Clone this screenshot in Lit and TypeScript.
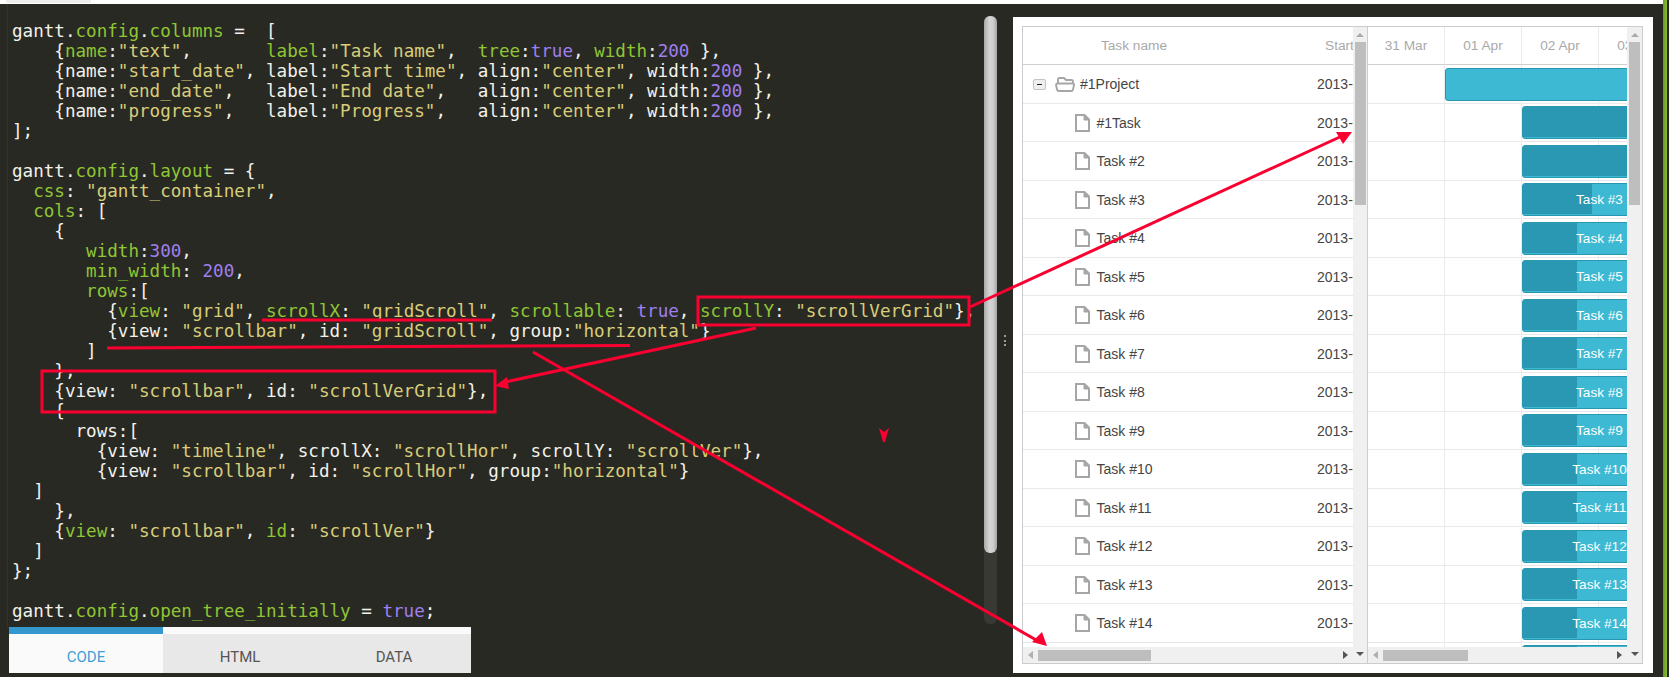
import { LitElement, html, css, svg } from "lit";
import { customElement } from "lit/decorators.js";

const CODE: string[] = [
  `gantt.<g>config</>.<g>columns</> =  [`,
  `    {<g>name</>:<y>"text"</>,       <g>label</>:<y>"Task name"</>,  <g>tree</>:<p>true</>, <g>width</>:<p>200</> },`,
  `    {name:<y>"start_date"</>, label:<y>"Start time"</>, align:<y>"center"</>, width:<p>200</> },`,
  `    {name:<y>"end_date"</>,   label:<y>"End date"</>,   align:<y>"center"</>, width:<p>200</> },`,
  `    {name:<y>"progress"</>,   label:<y>"Progress"</>,   align:<y>"center"</>, width:<p>200</> },`,
  `];`,
  ``,
  `gantt.<g>config</>.<g>layout</> = {`,
  `  <g>css</>: <y>"gantt_container"</>,`,
  `  <g>cols</>: [`,
  `    {`,
  `       <g>width</>:<p>300</>,`,
  `       <g>min_width</>: <p>200</>,`,
  `       <g>rows</>:[`,
  `         {<g>view</>: <y>"grid"</>, <g>scrollX</>: <y>"gridScroll"</>, <g>scrollable</>: <p>true</>, <g>scrollY</>: <y>"scrollVerGrid"</>},`,
  `         {view: <y>"scrollbar"</>, id: <y>"gridScroll"</>, group:<y>"horizontal"</>}`,
  `       ]`,
  `    },`,
  `    {view: <y>"scrollbar"</>, id: <y>"scrollVerGrid"</>},`,
  `    {`,
  `      rows:[`,
  `        {view: <y>"timeline"</>, scrollX: <y>"scrollHor"</>, scrollY: <y>"scrollVer"</>},`,
  `        {view: <y>"scrollbar"</>, id: <y>"scrollHor"</>, group:<y>"horizontal"</>}`,
  `  ]`,
  `    },`,
  `    {<g>view</>: <y>"scrollbar"</>, <g>id</>: <y>"scrollVer"</>}`,
  `  ]`,
  `};`,
  ``,
  `gantt.<g>config</>.<g>open_tree_initially</> = <p>true</>;`,
];

function renderLine(src: string) {
  const parts: unknown[] = [];
  const re = /<([gyp])>(.*?)<\/>/g;
  let last = 0;
  let m: RegExpExecArray | null;
  while ((m = re.exec(src))) {
    parts.push(src.slice(last, m.index));
    parts.push(html`<span class=${m[1]}>${m[2]}</span>`);
    last = m.index + m[0].length;
  }
  parts.push(src.slice(last));
  return html`<div class="line">${parts}</div>`;
}

interface Task {
  name: string;
  progress: number;
  label: string;
}

const TASKS: Task[] = [
  { name: "#1Task", progress: 100, label: "" },
  { name: "Task #2", progress: 100, label: "" },
  { name: "Task #3", progress: 45, label: "Task #3" },
  ...[4, 5, 6, 7, 8, 9, 10, 11, 12, 13, 14, 15].map((n) => ({
    name: `Task #${n}`,
    progress: 35,
    label: `Task #${n}`,
  })),
];

const fileIcon = html`<svg class="file" width="15" height="18" viewBox="0 0 15 18">
  <path d="M1 1H9.5L14 5.5V17H1Z" fill="#fff" stroke="#a6a6a6" stroke-width="2" />
  <path d="M9 1V6H14" fill="#a6a6a6" stroke="#a6a6a6" stroke-width="1" />
</svg>`;

const folderIcon = html`<svg class="folder" width="20" height="15" viewBox="0 0 20 15" fill="none" stroke="#a6a6a6" stroke-width="1.9">
  <path d="M3 6V2.5Q3 1 4.5 1H9L11 3H16.5Q18 3 18 4.5V6" />
  <path d="M1 8Q1 6.5 2.5 6.5H17.5Q19.4 6.5 19 8L18 12.5Q17.7 14 16 14H4Q2.3 14 2 12.5Z" />
</svg>`;

const RED = "#fa0030";

const overlay = svg`
  <g fill="none" stroke=${RED} stroke-width="3">
    <path d="M262 320H492" />
    <rect x="698" y="297" width="271" height="28" />
    <path d="M107 348L630 345.5" />
    <rect x="42" y="371" width="453" height="41" />
    <path d="M970 307L1342 136" />
    <path d="M756 328L505 382" />
    <path d="M533 352L1038 641" />
  </g>
  <g fill=${RED}>
    <polygon points="1352,132 1336,132 1343,144" />
    <polygon points="495,386 507,377 509,389" />
    <polygon points="1047,646 1032,642 1042,632" />
    <polygon points="879,428 884,432 889,428 885,442 883,442" />
  </g>
`;

@customElement("app-root")
export class AppRoot extends LitElement {
  static styles = css`
    :host {
      display: block;
      position: relative;
      width: 1669px;
      height: 677px;
      overflow: hidden;
      background: #292923;
      font-family: "Liberation Sans", Arial, sans-serif;
    }
    .top {
      display: flex;
      height: 4px;
      width: 1663px;
      background: #fff;
    }
    .top-tab {
      width: 85px;
      height: 3px;
      margin-left: 6px;
      background: #eeeeee;
    }
    .main {
      display: flex;
      height: 673px;
    }
    .left {
      width: 984px;
      height: 669px;
      display: flex;
      flex-direction: column;
    }
    .editor {
      flex: 1;
      min-height: 0;
      margin-left: 7px;
      padding: 17px 0 0 4px;
      border-left: 1px solid #33332d;
      overflow: hidden;
      font-family: "DejaVu Sans Mono", "Liberation Mono", monospace;
      font-size: 17.58px;
      line-height: 20px;
      color: #f2f2ec;
      white-space: pre;
    }
    .line {
      height: 20px;
    }
    .g { color: #8fc634; }
    .y { color: #d8cd7a; }
    .p { color: #9f7fef; }
    .tabs {
      display: flex;
      flex: none;
      width: 462px;
      height: 46px;
      margin-left: 9px;
      font-family: Roboto, sans-serif;
      font-size: 15px;
    }
    .tab {
      flex: 1;
      display: flex;
      align-items: center;
      justify-content: center;
      padding-top: 7px;
      box-sizing: border-box;
      border-top: 7px solid #fafafa;
      background: #e8e8e8;
      color: #555;
    }
    .tab.active {
      border-top-color: #3498cf;
      background: #fafafa;
      color: #3f9fd6;
    }
    .vs-col {
      width: 13px;
      height: 608px;
      margin-top: 12px;
      border-radius: 6px;
      background: #383834;
    }
    .vs-thumb {
      height: 537px;
      border-radius: 6px;
      background: linear-gradient(to right, #a8a8a8, #d4d4d4 40%, #cfcfcf 70%, #a4a4a4);
    }
    .split {
      width: 16px;
      height: 100%;
      display: flex;
      flex-direction: column;
      align-items: center;
      justify-content: center;
      gap: 2.5px;
    }
    .split i {
      display: block;
      width: 2px;
      height: 2px;
      background: #9a9a9a;
    }
    .panel {
      width: 640px;
      height: 656px;
      margin-top: 13px;
      box-sizing: border-box;
      padding: 9px 10px 9px 9px;
      background: #fff;
    }
    .gantt {
      display: flex;
      height: 638px;
      box-sizing: border-box;
      border: 1px solid #cccccc;
      color: #454545;
      font-size: 14px;
    }
    .area {
      display: flex;
      flex-direction: column;
      min-width: 0;
    }
    .area.grid { width: 330px; }
    .area.time { width: 259px; border-left: 1px solid #cccccc; }
    .head {
      display: flex;
      flex: none;
      height: 38px;
      box-sizing: border-box;
      border-bottom: 1.5px solid #d0d0d0;
      overflow: hidden;
      color: #a9a9a9;
      font-size: 13.7px;
      white-space: nowrap;
      align-items: center;
    }
    .h-name { flex: none; width: 222px; text-align: center; }
    .h-start { flex: none; margin-left: 80px; }
    .h-cell {
      flex: none;
      width: 77px;
      height: 100%;
      box-sizing: border-box;
      border-right: 1px solid #ebebeb;
      display: flex;
      align-items: center;
      justify-content: center;
    }
    .rows {
      height: 582px;
      flex: none;
      overflow: hidden;
    }
    .row {
      display: flex;
      align-items: center;
      height: 38.53px;
      box-sizing: border-box;
      padding-top: 1px;
      border-bottom: 1px solid #e9e9e9;
      white-space: nowrap;
    }
    .row.timeline {
      background: repeating-linear-gradient(to right, transparent 0 76px, #ebebeb 76px 77px);
    }
    .tree {
      flex: none;
      width: 294px;
      box-sizing: border-box;
      display: flex;
      align-items: center;
      padding-left: 52px;
    }
    .tree.project { padding-left: 10px; }
    .box {
      flex: none;
      width: 13px;
      height: 11px;
      box-sizing: border-box;
      margin-right: 9px;
      border: 1.5px solid #c4c4c4;
      border-radius: 2px;
      background: #eee;
      display: flex;
      align-items: center;
      justify-content: center;
    }
    .box::before {
      content: "";
      width: 5px;
      height: 1.5px;
      background: #222;
    }
    .folder { flex: none; margin-right: 5px; }
    .file { flex: none; margin-right: 6.5px; }
    .bar {
      position: relative;
      flex: none;
      height: 33px;
      box-sizing: border-box;
      border: 1px solid #2898b0;
      border-radius: 3px;
      background: #3db9d3;
      color: #fff;
      font-size: 13.6px;
      display: flex;
      align-items: center;
      justify-content: center;
      overflow: hidden;
    }
    .bar span { position: relative; }
    .progress {
      position: absolute;
      left: 0;
      top: 0;
      bottom: 1px;
      background: #2a98b3;
    }
    .hscroll {
      flex: 1;
      display: flex;
      align-items: center;
      padding: 0 5px;
      background: #f0f0f0;
    }
    .hthumb {
      height: 11px;
      background: #bebebe;
    }
    .tri-l, .tri-r, .tri-u, .tri-d {
      flex: none;
      width: 0;
      height: 0;
    }
    .tri-l { border: 4px solid transparent; border-left: 0; border-right: 5px solid #b0b0b0; }
    .tri-r { border: 4px solid transparent; border-right: 0; border-left: 5px solid #555; margin-left: auto; }
    .tri-u { border: 4px solid transparent; border-top: 0; border-bottom: 4px solid #aaa; }
    .tri-d { border: 4px solid transparent; border-bottom: 0; border-top: 4px solid #555; }
    .vscroll {
      flex: none;
      display: flex;
      flex-direction: column;
      align-items: center;
      width: 14px;
      background: #f0f0f0;
      padding: 6px 0 7px;
      box-sizing: border-box;
    }
    .vscroll.right { width: 15px; }
    .vthumb {
      width: 11px;
      height: 163px;
      margin-top: 5px;
      background: #bebebe;
    }
    .vscroll .tri-d { margin-top: auto; }
    .annot {
      position: absolute;
      left: 0;
      top: 0;
      pointer-events: none;
    }
    .green {
      width: 4px;
      height: 677px;
      margin-top: -4px;
      margin-left: 10px;
      flex: none;
      background: linear-gradient(to right, #6d9a26, #86bc30);
    }
  `;

  private vscroll(right = false) {
    return html`<div class="vscroll ${right ? "right" : ""}">
      <div class="tri-u"></div>
      <div class="vthumb"></div>
      <div class="tri-d"></div>
    </div>`;
  }

  private hscroll(offset: number, width: number) {
    return html`<div class="hscroll">
      <div class="tri-l"></div>
      <div class="hthumb" style="margin-left:${offset}px;width:${width}px"></div>
      <div class="tri-r"></div>
    </div>`;
  }

  private renderGrid() {
    return html`<div class="area grid">
      <div class="head">
        <div class="h-name">Task name</div>
        <div class="h-start">Start time</div>
      </div>
      <div class="rows">
        <div class="row">
          <div class="tree project"><div class="box"></div>${folderIcon}#1Project</div>
          2013-04-01
        </div>
        ${TASKS.map(
          (t) => html`<div class="row">
            <div class="tree">${fileIcon}${t.name}</div>
            2013-04-02
          </div>`
        )}
      </div>
      ${this.hscroll(5, 113)}
    </div>`;
  }

  private renderTimeline() {
    return html`<div class="area time">
      <div class="head">
        ${["31 Mar", "01 Apr", "02 Apr", "03 Apr"].map((d) => html`<div class="h-cell">${d}</div>`)}
      </div>
      <div class="rows">
        <div class="row timeline">
          <div class="bar" style="margin-left:77px;width:400px"></div>
        </div>
        ${TASKS.map(
          (t) => html`<div class="row timeline">
            <div class="bar" style="margin-left:154px;width:155px">
              <div class="progress" style="width:${t.progress}%"></div>
              <span>${t.label}</span>
            </div>
          </div>`
        )}
      </div>
      ${this.hscroll(5, 85)}
    </div>`;
  }

  render() {
    return html`
      <div class="top"><div class="top-tab"></div></div>
      <div class="main">
        <div class="left">
          <div class="editor">${CODE.map(renderLine)}</div>
          <div class="tabs">
            <div class="tab active">CODE</div>
            <div class="tab">HTML</div>
            <div class="tab">DATA</div>
          </div>
        </div>
        <div class="vs-col"><div class="vs-thumb"></div></div>
        <div class="split"><i></i><i></i><i></i></div>
        <div class="panel">
          <div class="gantt">
            ${this.renderGrid()} ${this.vscroll()} ${this.renderTimeline()} ${this.vscroll(true)}
          </div>
        </div>
        <div class="green"></div>
      </div>
      <svg class="annot" width="1669" height="677" viewBox="0 0 1669 677">${overlay}</svg>
    `;
  }
}
